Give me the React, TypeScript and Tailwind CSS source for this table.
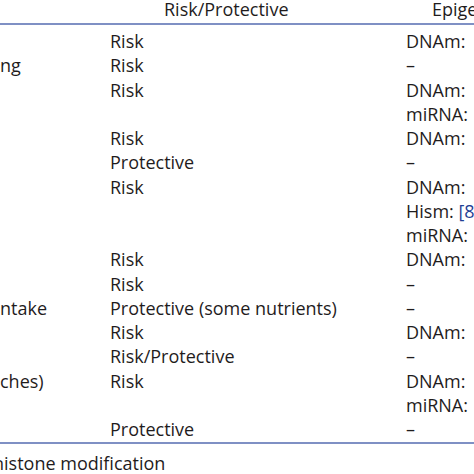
const rows: [string, string, string][] = [
  ["", "Risk", "DNAm:"],
  ["ng", "Risk", "–"],
  ["", "Risk", "DNAm:"],
  ["", "", "miRNA:"],
  ["", "Risk", "DNAm:"],
  ["", "Protective", "–"],
  ["", "Risk", "DNAm:"],
  ["", "", "HISM"],
  ["", "", "miRNA:"],
  ["", "Risk", "DNAm:"],
  ["", "Risk", "–"],
  ["ntake", "Protective (some nutrients)", "–"],
  ["", "Risk", "DNAm:"],
  ["", "Risk/Protective", "–"],
  ["ches)", "Risk", "DNAm:"],
  ["", "", "miRNA:"],
  ["", "Protective", "–"],
];

export default function App() {
  return (
    <div
      className="w-[474px] h-[474px] overflow-hidden bg-white text-[#1f1c1d] text-[18px]"
      style={{ fontFamily: '"Open Sans", "Liberation Sans", sans-serif' }}
    >
      {/* header */}
      <div className="flex h-[23px] leading-[18px] whitespace-nowrap">
        <div className="w-[164px] shrink-0" />
        <div className="w-[268px] shrink-0">Risk/Protective</div>
        <div className="shrink-0">Epigenetic</div>
      </div>
      <div className="h-[2px] bg-[#7f90c4]" />

      <div className="pt-[4px]">
        {rows.map((r, i) => (
          <div key={i} className="flex h-[24.25px] leading-[24px] whitespace-nowrap">
            <div className="w-[110px] shrink-0 overflow-hidden">{r[0]}</div>
            <div className="w-[296px] shrink-0">{r[1]}</div>
            <div className="flex-1 overflow-hidden">
              {r[2] === "HISM" ? (
                <>
                  Hism: <span className="text-[#1f3f94]">[8</span>
                </>
              ) : (
                r[2]
              )}
            </div>
          </div>
        ))}
      </div>
      <div className="h-[2px] bg-[#7f90c4] mt-[1px]" />

      {/* footnote, left part out of view */}
      <div className="mt-[7px] leading-[24px] whitespace-nowrap -ml-[7px]">
        histone modification
      </div>
    </div>
  );
}
